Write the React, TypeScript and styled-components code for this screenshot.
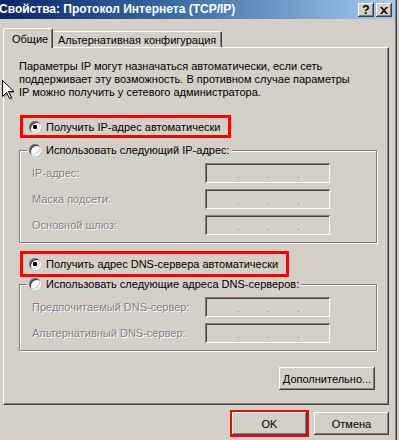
import React from 'react';
import styled, { createGlobalStyle, css } from 'styled-components';

const face = '#d4d0c8';
const shade = '#808080';
const dark = '#404040';

const Global = createGlobalStyle`
	html, body {
		margin: 0;
		padding: 0;
		background: ${face};
	}
	body {
		font-family: 'Liberation Sans', Arial, sans-serif;
		font-size: 11px;
		color: #000;
	}
`;

const raised = css`
	background: ${face};
	box-shadow: inset -1px -1px ${dark}, inset 1px 1px #fff, inset -2px -2px ${shade},
		inset 2px 2px ${face};
`;

const Window = styled.div`
	position: relative;
	width: 396px;
	height: 440px;
	border-right: 1px solid ${dark};
	box-shadow: inset -1px 0 ${shade};
	background: ${face};
	overflow: hidden;
`;

const TitleBar = styled.div`
	display: flex;
	justify-content: space-between;
	align-items: flex-start;
	height: 19px;
	margin-right: 1px;
	padding: 0 3px 0 0;
	background: linear-gradient(to right, #0a246a 0%, #3a6ea5 45%, #a6caf0 100%);
`;

const Title = styled.div`
	margin-left: -1px;
	line-height: 19px;
	color: #fff;
	font-weight: bold;
	font-size: 12px;
	white-space: nowrap;
`;

const CaptionButtons = styled.div`
	display: flex;
	gap: 2px;
	padding-top: 3px;
`;

const CaptionButton = styled.div`
	${raised};
	width: 16px;
	height: 14px;
	display: flex;
	align-items: center;
	justify-content: center;
	font-weight: bold;
	font-size: 12px;
	line-height: 14px;
`;

const Body = styled.div`
	padding: 8px 7px 0 3px;
`;

const Tabs = styled.div`
	display: flex;
	align-items: flex-end;
	height: 20px;
`;

const Tab = styled.div<{ $active?: boolean }>`
	position: relative;
	display: flex;
	align-items: center;
	background: ${face};
	border-top: 1px solid #fff;
	border-left: 1px solid #fff;
	border-right: 1px solid ${dark};
	box-shadow: inset -1px 0 ${shade};
	border-radius: 2px 2px 0 0;
	white-space: nowrap;
	box-sizing: border-box;
	${p =>
		p.$active
			? css`
					width: 50px;
					height: 20px;
					margin-bottom: -1px;
					padding-left: 8px;
					z-index: 1;
			  `
			: css`
					width: 169px;
					height: 16px;
					padding-left: 5px;
					border-left: none;
			  `}
`;

const Panel = styled.div`
	border-top: 1px solid #fff;
	border-left: 1px solid #fff;
	border-right: 1px solid ${dark};
	border-bottom: 1px solid ${dark};
	box-shadow: inset -1px -1px ${shade};
	padding: 12px 11px 12px 15px;
	height: 358px;
	box-sizing: border-box;
	display: flex;
	flex-direction: column;
`;

const Intro = styled.p`
	margin: 0;
	line-height: 13px;
	white-space: nowrap;
`;

const Choice = styled.div<{ $marked?: boolean; $tall?: boolean }>`
	display: flex;
	align-items: center;
	gap: 5px;
	width: fit-content;
	margin-left: 1px;
	padding: 0 8px 0 6px;
	height: ${p => (p.$tall ? 26 : 23)}px;
	box-sizing: border-box;
	border: 3px solid ${p => (p.$marked ? '#f00' : 'transparent')};
`;

const Radio = styled.span<{ $checked?: boolean }>`
	position: relative;
	flex: none;
	width: 12px;
	height: 12px;
	border-radius: 50%;
	background: #fff;
	box-shadow: inset 1px 1px ${shade}, inset -1px -1px #fff, inset 2px 2px ${dark},
		inset -2px -2px ${face};
	&::after {
		content: '';
		display: ${p => (p.$checked ? 'block' : 'none')};
		position: absolute;
		left: 4px;
		top: 4px;
		width: 4px;
		height: 4px;
		border-radius: 1px;
		background: #000;
	}
`;

const Group = styled.fieldset<{ $gap: number }>`
	margin: ${p => p.$gap}px 0 0 0;
	padding: 6px 0 7px 12px;
	min-width: 0;
	border: 1px solid ${shade};
	box-shadow: inset 1px 1px #fff, 1px 1px #fff;
	display: flex;
	flex-direction: column;
	gap: 6px;
`;

const Legend = styled.legend`
	display: flex;
	align-items: center;
	gap: 5px;
	height: 14px;
	margin-left: -5px;
	padding: 0 2px;
	background: ${face};
`;

const FieldRow = styled.div`
	display: grid;
	grid-template-columns: 173px 125px;
	align-items: center;
	height: 20px;
`;

const DisabledLabel = styled.span`
	color: ${shade};
	text-shadow: 1px 1px #fff;
	white-space: nowrap;
`;

const IpBox = styled.div`
	display: flex;
	align-items: flex-end;
	gap: 29px;
	height: 20px;
	padding: 0 0 5px 33px;
	box-sizing: border-box;
	background: ${face};
	box-shadow: inset 1px 1px ${shade}, inset -1px -1px #fff, inset 2px 2px ${dark},
		inset -2px -2px ${face};
`;

const Dot = styled.span`
	width: 1px;
	height: 1px;
	background: ${shade};
`;

const PanelFooter = styled.div`
	display: flex;
	justify-content: flex-end;
	margin-top: 16px;
	padding-right: 2px;
`;

const Button = styled.div<{ $w: number }>`
	${raised};
	width: ${p => p.$w}px;
	height: 23px;
	display: flex;
	align-items: center;
	justify-content: center;
	white-space: nowrap;
`;

const DialogButtons = styled.div`
	display: flex;
	justify-content: flex-end;
	align-items: center;
	gap: 5px;
	margin-top: 5px;
`;

const Marked = styled.div`
	border: 2px solid #f00;
`;

const Cursor = styled.svg`
	position: absolute;
	left: 2px;
	top: 80px;
`;

const IpField = ({ label }: { label: string }) => (
	<FieldRow>
		<DisabledLabel>{label}</DisabledLabel>
		<IpBox>
			<Dot />
			<Dot />
			<Dot />
		</IpBox>
	</FieldRow>
);

export default function App() {
	return (
		<>
			<Global />
			<Window>
				<TitleBar>
					<Title>Свойства: Протокол Интернета (TCP/IP)</Title>
					<CaptionButtons>
						<CaptionButton>?</CaptionButton>
						<CaptionButton>
							<svg width="8" height="7" viewBox="0 0 8 7">
								<path
									d="M0 0h2l2 2.2L6 0h2L5 3.5 8 7H6L4 4.8 2 7H0l3-3.5z"
									fill="#000"
								/>
							</svg>
						</CaptionButton>
					</CaptionButtons>
				</TitleBar>
				<Body>
					<Tabs>
						<Tab $active>Общие</Tab>
						<Tab>Альтернативная конфигурация</Tab>
					</Tabs>
					<Panel>
						<Intro>
							Параметры IP могут назначаться автоматически, если сеть
							<br />
							поддерживает эту возможность. В противном случае параметры
							<br />
							IP можно получить у сетевого администратора.
						</Intro>
						<Choice $marked style={{ marginTop: 16 }}>
							<Radio $checked />
							Получить IP-адрес автоматически
						</Choice>
						<Group $gap={5}>
							<Legend>
								<Radio />
								Использовать следующий IP-адрес:
							</Legend>
							<IpField label="IP-адрес:" />
							<IpField label="Маска подсети:" />
							<IpField label="Основной шлюз:" />
						</Group>
						<Choice $marked $tall style={{ marginTop: 8 }}>
							<Radio $checked />
							Получить адрес DNS-сервера автоматически
						</Choice>
						<Group $gap={0}>
							<Legend>
								<Radio />
								Использовать следующие адреса DNS-серверов:
							</Legend>
							<IpField label="Предпочитаемый DNS-сервер:" />
							<IpField label="Альтернативный DNS-сервер:" />
						</Group>
						<PanelFooter>
							<Button $w={96}>Дополнительно...</Button>
						</PanelFooter>
					</Panel>
					<DialogButtons>
						<Marked>
							<Button $w={75}>OK</Button>
						</Marked>
						<Button $w={75}>Отмена</Button>
					</DialogButtons>
				</Body>
				<Cursor width="14" height="21" viewBox="0 0 14 21">
					<path d="M2 2v16l4-4 3 6 2-1-3-6h5z" fill="#000" opacity="0.3" />
					<path
						d="M0.5 0.5v16l4-4 3 6 2-1-3-6h5.5z"
						fill="#fff"
						stroke="#000"
						strokeWidth="1"
					/>
				</Cursor>
			</Window>
		</>
	);
}
